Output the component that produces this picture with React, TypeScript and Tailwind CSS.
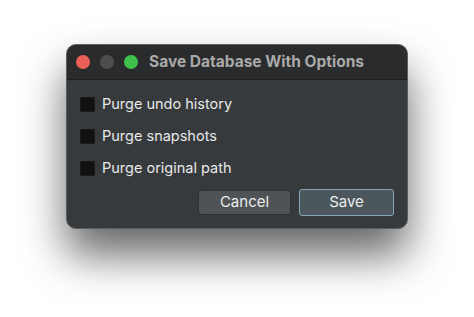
import * as React from "react";

const OPTIONS = ["Purge undo history", "Purge snapshots", "Purge original path"];

function Checkbox({ label }: { label: string }) {
  const [checked, setChecked] = React.useState(false);
  return (
    <label className="flex h-[32px] cursor-default items-center gap-[7px]">
      <span
        onClick={() => setChecked(!checked)}
        className="flex h-[15px] w-[15px] items-center justify-center border border-[#1c1c1c] bg-[#111111]"
      >
        {checked && <span className="text-[11px] leading-none text-white">✓</span>}
      </span>
      <span className="text-[14.5px] text-[#e8e8e8]">{label}</span>
    </label>
  );
}

export default function App() {
  return (
    <div
      className="h-[317px] w-[474px] overflow-hidden bg-white pl-[66px] pt-[44px]"
      style={{ fontFamily: "Inter, 'Liberation Sans', sans-serif" }}
    >
      <div className="flex h-[185px] w-[342px] flex-col overflow-hidden rounded-[10px] border border-[#5b5d5f] bg-[#373a3c] shadow-[0_26px_44px_rgba(0,0,0,0.6)]">
        {/* title bar */}
        <div className="flex h-[35px] shrink-0 items-center border-b border-[#1d1e1f] bg-[#2a2b2c] pl-[9px]">
          <div className="flex items-center gap-[10px]">
            <span className="h-[14px] w-[14px] rounded-full bg-[#ec5f57]" />
            <span className="h-[14px] w-[14px] rounded-full bg-[#4d4e50]" />
            <span className="h-[14px] w-[14px] rounded-full bg-[#3fc04a]" />
          </div>
          <span className="ml-[11px] text-[15.5px] font-bold text-[#a9a9a9]">
            Save Database With Options
          </span>
        </div>

        {/* options */}
        <div className="flex flex-1 flex-col pl-[13px] pr-[13px] pt-[8px]">
          {OPTIONS.map((o) => (
            <Checkbox key={o} label={o} />
          ))}
          <div className="mt-[6px] flex justify-end gap-[8px]">
            <button className="h-[25px] w-[93px] rounded-[3px] border border-[#2e3032] bg-[#505355] text-[15px] text-[#ececec]">
              Cancel
            </button>
            <button className="h-[27px] w-[95px] -mt-[1px] rounded-[3px] border border-[#86a4b3] bg-[#4b575d] text-[15px] text-[#ececec]">
              Save
            </button>
          </div>
        </div>
      </div>
    </div>
  );
}
